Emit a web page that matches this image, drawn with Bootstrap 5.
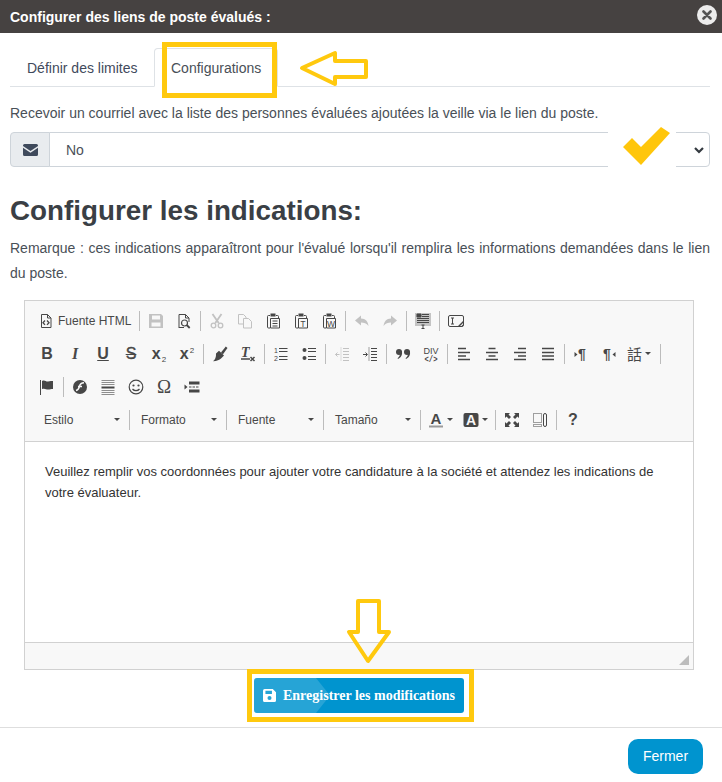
<!DOCTYPE html>
<html lang="fr">
<head>
  <meta charset="UTF-8">
  <meta name="viewport" content="width=device-width, initial-scale=1.0">
  <title>Configurer des liens de poste évalués</title>
  <link href="https://cdn.jsdelivr.net/npm/bootstrap@5.3.3/dist/css/bootstrap.min.css" rel="stylesheet">
  <style>
    html, body { height: 782px; overflow: hidden; }
    body { font-family: "Liberation Sans", Arial, sans-serif; font-size: 14px; color: #495057; background: #fff; position: relative; }

    .fenetre { height: 782px; border: 0; border-radius: 0; }
    .fenetre .modal-header { height: 33px; padding: 0 5px 0 10px; background: #464241; border: 0; border-radius: 0; }
    .titre-fenetre { font-size: 14px; font-weight: 700; color: #fff; line-height: 1; margin: 0; }
    .fermer-rond { width: 20px; height: 20px; border: 0; padding: 0; border-radius: 50%; background: #ececec; color: #555; margin-top: -4px; }
    .fenetre .modal-body { padding: 15px 12px 0 10px; flex: none; }

    .fenetre .nav-tabs { border-color: #dee2e6; height: 39px; }
    .fenetre .nav-tabs .nav-link { font-size: 14px; height: 39px; width: 144px; padding: 9px 0 0 16px; color: #3f4a5c; border-radius: 4px 4px 0 0; }
    .fenetre .nav-tabs .nav-item + .nav-item .nav-link { width: 124px; color: #495057; }
    .consigne { margin: 16px 0 8px; line-height: 21px; }
    .groupe-courriel { height: 35px; flex-wrap: nowrap; }
    .groupe-courriel .input-group-text { width: 40px; flex: none; justify-content: center; padding: 0; background: #e9ecef; border-color: #ced4da; border-radius: 4px 0 0 4px; color: #3f4a5c; }
    .groupe-courriel .form-select { flex: 1 1 0; width: auto; min-width: 0; height: 35px; font-size: 14px; color: #495057; padding: 2px 0 0 16px; border-color: #ced4da; border-radius: 0 4px 4px 0; background-image: url("data:image/svg+xml,%3csvg xmlns='http://www.w3.org/2000/svg' viewBox='0 0 10 8'%3e%3cpath fill='none' stroke='%23343a40' stroke-width='2.200' d='M1 2l4 4 4-4'/%3e%3c/svg%3e"); background-position: right 5px center; background-size: 10px 8px; }
    .titre-indications { font-size: 27.8px; font-weight: 700; line-height: 34px; color: #3a3f45; margin: 27px 0 8px; }
    .remarque { line-height: 25px; text-align: justify; margin: 0 0 14px; }

    .editeur { width: 670px; height: 370px; margin-left: 14px; border: 1px solid #d1d1d1; display: flex; flex-direction: column; }
    .editeur-barre { height: 141px; padding: 3px 0 0 8px; background: #f8f8f8; border-bottom: 1px solid #d1d1d1; flex: none; }
    .barre-ligne { height: 33px; display: flex; align-items: center; }
    .ed-btn { width: 28px; height: 24px; flex: none; display: flex; align-items: center; justify-content: center; color: #474747; }
    .ed-btn svg { width: 16px; height: 16px; display: block; }
    .ed-large { width: 35px; justify-content: flex-start; padding-left: 5px; gap: 3px; }
    .ed-source { width: 104px; justify-content: flex-start; padding-left: 5px; gap: 4px; font-size: 12px; color: #484848; }
    .ed-off { opacity: .3; }
    .ed-sep { width: 1px; height: 20px; background: #bcbcbc; margin: 0 2px; flex: none; }
    .ed-texte { font-size: 16px; line-height: 1; font-weight: 700; color: #474747; }
    .ed-serif { font-family: "Liberation Serif", serif; }
    .ed-souligne { text-decoration: underline; }
    .ed-barre { text-decoration: line-through; font-weight: 400; -webkit-text-stroke: .4px #474747; }
    .ed-petit { font-size: 8px; font-weight: 400; line-height: 1; margin-left: 1px; position: relative; }
    .ed-bas { top: 3px; }
    .ed-haut { top: -6px; }
    .ed-omega { font-weight: 400; font-size: 19px; }
    .ed-fleche { width: 0; height: 0; border: 3px solid transparent; border-top: 3px solid #474747; border-bottom: 0; flex: none; }
    .lang-glyphe { font-family: "Noto Sans CJK TC", "Noto Sans CJK SC", sans-serif; font-size: 15px; line-height: 1; color: #474747; margin-left: -1px; }
    .ed-combo { width: 92px; height: 24px; flex: none; display: flex; align-items: center; justify-content: space-between; padding: 0 7px 0 9px; font-size: 12px; color: #484848; }
    .ed-combo-debut { margin-left: 2px; }
    .editeur-texte { flex: 1; padding: 19px 20px 0; font-size: 13px; line-height: 21px; color: #333; background: #fff; }
    .editeur-pied { height: 27px; flex: none; background: #f8f8f8; border-top: 1px solid #d1d1d1; display: flex; justify-content: flex-end; align-items: flex-end; padding: 0 4px 4px 0; }
    .poignee { width: 10px; height: 10px; background: #bdbdbd; clip-path: polygon(100% 0, 100% 100%, 0 100%); }

    .zone-enregistrer { padding-top: 8px; height: 57px; }
    .btn-enregistrer { width: 210px; height: 35px; margin-left: 244px; padding: 0 0 0 29px; background: #0094cf; color: #fff; border: 0; border-radius: 3px; font-family: "Liberation Serif", serif; font-weight: 700; font-size: 14px; position: relative; text-align: left; overflow: hidden; white-space: nowrap; }
    .btn-enregistrer::before { content: ""; position: absolute; left: 0; top: 0; bottom: 0; width: 76px; background: rgba(255, 255, 255, .15); clip-path: polygon(0 0, 62px 0, 100% 50%, 62px 100%, 0 100%); }
    .btn-enregistrer svg { position: absolute; left: 9px; top: 11px; width: 13px; height: 13px; }
    .fenetre .modal-footer { height: 55px; flex: none; padding: 11px 19px 0 0; margin-top: 0; align-items: flex-start; border-top: 1px solid #dedede; border-radius: 0; }
    .btn-fermer { width: 75px; height: 35px; margin: 0; padding: 0; background: #0094cf; color: #fff; border: 0; border-radius: 10px; font-size: 14px; }

    .annotation { position: absolute; left: 0; top: 0; width: 722px; height: 782px; pointer-events: none; }
  </style>
</head>
<body>

  <svg width="0" height="0" class="position-absolute">
    <defs>
      <symbol id="ic-source" viewBox="0 0 16 16"><path d="M3.500 1.500h6l3.500 3.500v9.500h-9.500z M9.500 1.500v3.500h3.500" fill="none" stroke="currentColor"/><path d="M7 7.500 5 9.700l2 2.200M9 7.500l2 2.200-2 2.200" fill="none" stroke="currentColor" stroke-width="1.300"/></symbol>
      <symbol id="ic-save" viewBox="0 0 16 16"><path d="M1 1h12l2 2v12H1z" fill="currentColor"/><path d="M4 2.500h8v4H4z M3.500 9.500h9v4h-9z" fill="#f8f8f8"/></symbol>
      <symbol id="ic-preview" viewBox="0 0 16 16"><path d="M3 15V1.500h6.500L13 5v4" fill="none" stroke="currentColor"/><path d="M9.500 1.500V5H13" fill="none" stroke="currentColor"/><circle cx="8.500" cy="10" r="3" fill="none" stroke="currentColor" stroke-width="1.200"/><path d="m10.700 12 3 3" stroke="currentColor" stroke-width="1.800"/><path d="M3 14.500h5" stroke="currentColor"/></symbol>
      <symbol id="ic-cut" viewBox="0 0 16 16"><path d="M3.500 1 9.700 10M12.500 1 6.300 10" stroke="currentColor" stroke-width="1.800" fill="none"/><circle cx="4.500" cy="12.500" r="2.300" fill="none" stroke="currentColor" stroke-width="1.300"/><circle cx="11.500" cy="12.500" r="2.300" fill="none" stroke="currentColor" stroke-width="1.300"/></symbol>
      <symbol id="ic-copy" viewBox="0 0 16 16"><path d="M6 11H1.500V1.500h5L9 4v2" fill="none" stroke="currentColor"/><path d="M6.500 5.500h5l3 3v6.500h-8z" fill="none" stroke="currentColor"/></symbol>
      <symbol id="ic-paste" viewBox="0 0 16 16"><path d="M5 2.500H3.500a1 1 0 0 0-1 1V14a1 1 0 0 0 1 1H5M11 2.500h1.500a1 1 0 0 1 1 1V5" fill="none" stroke="currentColor"/><path d="M5.500 .5h5v3h-5z" fill="currentColor"/><path d="M5.500 5.500h9v9.500h-9z" fill="none" stroke="currentColor"/><path d="M7.500 8h5M7.500 10.500h5M7.500 13h5" stroke="currentColor"/></symbol>
      <symbol id="ic-paste-t" viewBox="0 0 16 16"><path d="M5 2.500H3.500a1 1 0 0 0-1 1V14a1 1 0 0 0 1 1H5M11 2.500h1.500a1 1 0 0 1 1 1V5" fill="none" stroke="currentColor"/><path d="M5.500 .5h5v3h-5z" fill="currentColor"/><path d="M5.500 5.500h9v9.500h-9z" fill="none" stroke="currentColor"/><text x="10" y="13.500" text-anchor="middle" font-size="9" font-family="Liberation Mono, monospace" fill="currentColor">T</text></symbol>
      <symbol id="ic-paste-w" viewBox="0 0 16 16"><path d="M5 2.500H3.500a1 1 0 0 0-1 1V14a1 1 0 0 0 1 1H5M11 2.500h1.500a1 1 0 0 1 1 1V5" fill="none" stroke="currentColor"/><path d="M5.500 .5h5v3h-5z" fill="currentColor"/><path d="M5.500 5.500h9v9.500h-9z" fill="none" stroke="currentColor"/><text x="10" y="13.500" text-anchor="middle" font-size="8.500" font-family="Liberation Sans, sans-serif" fill="currentColor">W</text></symbol>
      <symbol id="ic-undo" viewBox="0 0 16 16"><path d="M7 2.500 1 7.500l6 5v-3c3 0 5.500.8 7.500 3.500-.5-4.500-3-7.500-7.500-7.500z" fill="currentColor"/></symbol>
      <symbol id="ic-redo" viewBox="0 0 16 16"><path d="M9 2.500l6 5-6 5v-3c-3 0-5.500.8-7.500 3.500.5-4.500 3-7.500 7.500-7.500z" fill="currentColor"/></symbol>
      <symbol id="ic-blocks" viewBox="0 0 16 16"><path d="M0 0h16v13H0z" fill="#c4c4c4"/><path d="M2 1h4v3H2zM7 1.500h7M7 3.500h7M2 5.500h12M2 7.500h12M2 9.500h12" stroke="currentColor" fill="currentColor"/><path d="M6.500 12h3M8 12v3.500M6.500 15.500h3" stroke="currentColor"/></symbol>
      <symbol id="ic-select" viewBox="0 0 16 16"><rect x=".5" y="2.500" width="15" height="11" rx="1.500" fill="none" stroke="currentColor"/><path d="M3 5h3M4.500 5v6M3 11h3" stroke="currentColor"/><path d="M10 13l5-5v2l-3 3zM13.500 13l1.500-1.500V13z" fill="currentColor"/></symbol>
      <symbol id="ic-brush" viewBox="0 0 16 16"><path d="M9 6.500 13.800.5l1.700 1.500L10.800 8.500z" fill="currentColor"/><path d="M4 7.500 7 4.800l5 4.700-3 3c-1.500 1.500-4 2.500-8 2.700 2-1.300 3.300-4.300 3-7.700z" fill="currentColor"/></symbol>
      <symbol id="ic-clear" viewBox="0 0 16 16"><text x="1" y="11" font-size="14" font-weight="700" font-style="italic" font-family="Liberation Serif, serif" fill="currentColor">T</text><path d="M1 13h9" stroke="currentColor" stroke-width="1.500"/><path d="m10.500 11 4 4m0-4-4 4" stroke="currentColor" stroke-width="1.500"/></symbol>
      <symbol id="ic-ol" viewBox="0 0 16 16"><text x="1" y="7" font-size="7" font-family="Liberation Sans, sans-serif" fill="currentColor">1</text><text x="1" y="15" font-size="7" font-family="Liberation Sans, sans-serif" fill="currentColor">2</text><path d="M6 2.500h8.500M6 5.500h8.500M6 10.500h8.500M6 13.500h8.500" stroke="currentColor"/></symbol>
      <symbol id="ic-ul" viewBox="0 0 16 16"><circle cx="3.500" cy="4" r="2" fill="currentColor"/><circle cx="3.500" cy="12" r="2" fill="currentColor"/><path d="M7 2.500h8M7 5.500h8M7 10.500h8M7 13.500h8" stroke="currentColor"/></symbol>
      <symbol id="ic-outdent" viewBox="0 0 16 16"><path d="M7 1.500v13" stroke="currentColor" stroke-dasharray="1 1"/><path d="M9 2.500h6M9 5.500h6M9 8.500h6M9 11.500h6M9 14.500h6" stroke="currentColor"/><path d="M5.500 8.500H1.500M3.500 6.500l-2 2 2 2" fill="none" stroke="currentColor"/></symbol>
      <symbol id="ic-indent" viewBox="0 0 16 16"><path d="M7 1.500v13" stroke="currentColor" stroke-dasharray="1 1"/><path d="M9 2.500h6M9 5.500h6M9 8.500h6M9 11.500h6M9 14.500h6" stroke="currentColor"/><path d="M1 8.500h4M3.500 6.500l2 2-2 2" fill="none" stroke="currentColor"/></symbol>
      <symbol id="ic-quote" viewBox="0 0 16 16"><circle cx="4" cy="6" r="3" fill="currentColor"/><path d="M5 4c2 .5 2.300 2.500 2 4-.3 2-1.800 4-4 5l-.4-.8C4 11 5 9.500 5 8z" fill="currentColor"/><circle cx="12" cy="6" r="3" fill="currentColor"/><path d="M13 4c2 .5 2.300 2.500 2 4-.3 2-1.800 4-4 5l-.4-.8C12 11 13 9.500 13 8z" fill="currentColor"/></symbol>
      <symbol id="ic-div" viewBox="0 0 16 16"><text x="8" y="8" text-anchor="middle" font-size="9" font-family="Liberation Sans, sans-serif" fill="currentColor">DIV</text><text x="8" y="16" text-anchor="middle" font-size="9" font-weight="700" font-family="Liberation Mono, monospace" textLength="13" lengthAdjust="spacingAndGlyphs" fill="currentColor">&lt;/&gt;</text></symbol>
      <symbol id="ic-left" viewBox="0 0 16 16"><path d="M2 2.500h8M2 6.500h12M2 10h8M2 13.500h12" stroke="currentColor" stroke-width="1.700"/></symbol>
      <symbol id="ic-center" viewBox="0 0 16 16"><path d="M4.500 2.500h7M2 6.500h12M4.500 10h7M2 13.500h12" stroke="currentColor" stroke-width="1.700"/></symbol>
      <symbol id="ic-right" viewBox="0 0 16 16"><path d="M6 2.500h8M2 6.500h12M6 10h8M2 13.500h12" stroke="currentColor" stroke-width="1.700"/></symbol>
      <symbol id="ic-justify" viewBox="0 0 16 16"><path d="M2 2.500h12M2 6.500h12M2 10h12M2 13.500h12" stroke="currentColor" stroke-width="1.700"/></symbol>
      <symbol id="ic-ltr" viewBox="0 0 16 16"><path d="M1.500 6l3 2.500-3 2.500z" fill="currentColor"/><text x="5" y="13" font-size="14" font-weight="700" font-family="Liberation Sans, sans-serif" fill="currentColor">¶</text></symbol>
      <symbol id="ic-rtl" viewBox="0 0 16 16"><path d="M14.500 6l-3 2.500 3 2.500z" fill="currentColor"/><text x="2" y="13" font-size="14" font-weight="700" font-family="Liberation Sans, sans-serif" fill="currentColor">¶</text></symbol>
      <symbol id="ic-flag" viewBox="0 0 16 16"><path d="M1.500 1v15" stroke="currentColor"/><path d="M3 2c3-1.500 4 1 6 .5 2-.4 4-.5 5-.5v8c-2 0-3 .5-5 .5S6 9 3 10z" fill="currentColor"/></symbol>
      <symbol id="ic-flash" viewBox="0 0 16 16"><circle cx="8" cy="8" r="7" fill="currentColor"/><path d="M12 3.800c-3 0-4 1.500-4.500 3.500S6.300 11 4 11.500" fill="none" stroke="#f8f8f8" stroke-width="1.500"/><path d="M6 7.500h4" stroke="#f8f8f8" stroke-width="1.500"/></symbol>
      <symbol id="ic-hr" viewBox="0 0 16 16"><path d="M1.500 1.500h13M1.500 3.500h13M1.500 5.500h13M1.500 11.500h13M1.500 13.500h13M1.500 15.500h13" stroke="currentColor" stroke-opacity=".6"/><path d="M1.500 8.500h13" stroke="currentColor" stroke-width="2"/></symbol>
      <symbol id="ic-smiley" viewBox="0 0 16 16"><circle cx="8" cy="8" r="6.800" fill="none" stroke="currentColor" stroke-width="1.200"/><circle cx="5.500" cy="6.500" r="1.100" fill="currentColor"/><circle cx="10.500" cy="6.500" r="1.100" fill="currentColor"/><path d="M4.500 10c1.800 2.200 5.200 2.200 7 0" fill="none" stroke="currentColor" stroke-width="1.200"/></symbol>
      <symbol id="ic-pagebreak" viewBox="0 0 16 16"><path d="M.5 5.500l3 2.500-3 2.500z" fill="currentColor"/><path d="M5 2.500h10.500v3H5zM5 10.500h10.500v3H5z" fill="currentColor"/><path d="M5 8h10.500" stroke="currentColor" stroke-dasharray="2.500 1"/></symbol>
      <symbol id="ic-forecolor" viewBox="0 0 16 16"><text x="8" y="12" text-anchor="middle" font-size="15" font-weight="700" font-family="Liberation Sans, sans-serif" fill="currentColor">A</text><path d="M1 14.500h14" stroke="#9a9a9a" stroke-width="2"/></symbol>
      <symbol id="ic-backcolor" viewBox="0 0 16 16"><rect x=".5" y="1" width="15" height="14" rx="2" fill="currentColor"/><text x="8" y="13" text-anchor="middle" font-size="14" font-weight="700" font-family="Liberation Sans, sans-serif" fill="#f8f8f8">A</text></symbol>
      <symbol id="ic-maximize" viewBox="0 0 16 16"><path d="M1 1h5L4.500 2.500 7 5 5 7 2.500 4.500 1 6zM15 1v5l-1.500-1.500L11 7 9 5l2.500-2.500L10 1zM1 15v-5l1.500 1.500L5 9l2 2-2.500 2.500L6 15zM15 15h-5l1.500-1.500L9 11l2-2 2.500 2.500L15 10z" fill="currentColor"/></symbol>
      <symbol id="ic-showblocks" viewBox="0 0 16 16"><path d="M1.500 1.500h8v9h-8zM1.500 12.500h8v2h-8z" fill="none" stroke="currentColor" stroke-dasharray="1 1"/><rect x="11.500" y="1.500" width="3" height="13" rx="1.500" fill="none" stroke="currentColor"/></symbol>
    </defs>
  </svg>

  <div class="modal-content fenetre">
    <div class="modal-header">
      <h5 class="titre-fenetre">Configurer des liens de poste évalués :</h5>
      <button type="button" class="fermer-rond d-flex align-items-center justify-content-center ms-auto" aria-label="Fermer">
        <svg width="10" height="10" viewBox="0 0 10 10"><path d="M1.500 1.500l7 7m0-7-7 7" stroke="currentColor" stroke-width="2.600" stroke-linecap="round"/></svg>
      </button>
    </div>

    <div class="modal-body">
      <ul class="nav nav-tabs">
        <li class="nav-item"><a class="nav-link" href="#">Définir des limites</a></li>
        <li class="nav-item"><a class="nav-link active" href="#">Configurations</a></li>
      </ul>

      <p class="consigne">Recevoir un courriel avec la liste des personnes évaluées ajoutées la veille via le lien du poste.</p>
      <div class="input-group groupe-courriel">
        <span class="input-group-text">
          <svg width="15" height="12" viewBox="0 0 15 12"><path d="M1.500 0h12A1.500 1.500 0 0 1 15 1.500v.4L7.500 7 0 1.900v-.4A1.500 1.500 0 0 1 1.500 0zM0 3.700 7.500 8.800 15 3.700v6.800a1.500 1.500 0 0 1-1.500 1.500h-12A1.500 1.500 0 0 1 0 10.500z" fill="currentColor"/></svg>
        </span>
        <select class="form-select"><option>No</option></select>
      </div>

      <h2 class="titre-indications">Configurer les indications:</h2>
      <p class="remarque">Remarque : ces indications apparaîtront pour l'évalué lorsqu'il remplira les informations demandées dans le lien du poste.</p>

      <div class="editeur">
        <div class="editeur-barre">
          <div class="barre-ligne">
            <span class="ed-btn ed-source"><svg><use href="#ic-source"/></svg>Fuente HTML</span>
            <span class="ed-sep"></span>
            <span class="ed-btn ed-off"><svg><use href="#ic-save"/></svg></span>
            <span class="ed-btn"><svg><use href="#ic-preview"/></svg></span>
            <span class="ed-sep"></span>
            <span class="ed-btn ed-off"><svg><use href="#ic-cut"/></svg></span>
            <span class="ed-btn ed-off"><svg><use href="#ic-copy"/></svg></span>
            <span class="ed-btn"><svg><use href="#ic-paste"/></svg></span>
            <span class="ed-btn"><svg><use href="#ic-paste-t"/></svg></span>
            <span class="ed-btn"><svg><use href="#ic-paste-w"/></svg></span>
            <span class="ed-sep"></span>
            <span class="ed-btn ed-off"><svg><use href="#ic-undo"/></svg></span>
            <span class="ed-btn ed-off"><svg><use href="#ic-redo"/></svg></span>
            <span class="ed-sep"></span>
            <span class="ed-btn"><svg><use href="#ic-blocks"/></svg></span>
            <span class="ed-sep"></span>
            <span class="ed-btn"><svg><use href="#ic-select"/></svg></span>
          </div>
          <div class="barre-ligne">
            <span class="ed-btn"><span class="ed-texte">B</span></span>
            <span class="ed-btn"><span class="ed-texte ed-serif fst-italic">I</span></span>
            <span class="ed-btn"><span class="ed-texte ed-souligne">U</span></span>
            <span class="ed-btn"><span class="ed-texte ed-barre">S</span></span>
            <span class="ed-btn"><span class="ed-texte">x<span class="ed-petit ed-bas">2</span></span></span>
            <span class="ed-btn"><span class="ed-texte">x<span class="ed-petit ed-haut">2</span></span></span>
            <span class="ed-sep"></span>
            <span class="ed-btn"><svg><use href="#ic-brush"/></svg></span>
            <span class="ed-btn"><svg><use href="#ic-clear"/></svg></span>
            <span class="ed-sep"></span>
            <span class="ed-btn"><svg><use href="#ic-ol"/></svg></span>
            <span class="ed-btn"><svg><use href="#ic-ul"/></svg></span>
            <span class="ed-sep"></span>
            <span class="ed-btn ed-off"><svg><use href="#ic-outdent"/></svg></span>
            <span class="ed-btn"><svg><use href="#ic-indent"/></svg></span>
            <span class="ed-sep"></span>
            <span class="ed-btn"><svg><use href="#ic-quote"/></svg></span>
            <span class="ed-btn"><svg><use href="#ic-div"/></svg></span>
            <span class="ed-sep"></span>
            <span class="ed-btn"><svg><use href="#ic-left"/></svg></span>
            <span class="ed-btn"><svg><use href="#ic-center"/></svg></span>
            <span class="ed-btn"><svg><use href="#ic-right"/></svg></span>
            <span class="ed-btn"><svg><use href="#ic-justify"/></svg></span>
            <span class="ed-sep"></span>
            <span class="ed-btn"><svg><use href="#ic-ltr"/></svg></span>
            <span class="ed-btn"><svg><use href="#ic-rtl"/></svg></span>
            <span class="ed-btn ed-large"><span class="lang-glyphe">話</span><span class="ed-fleche"></span></span>
            <span class="ed-sep"></span>
          </div>
          <div class="barre-ligne">
            <span class="ed-btn"><svg><use href="#ic-flag"/></svg></span>
            <span class="ed-sep"></span>
            <span class="ed-btn"><svg><use href="#ic-flash"/></svg></span>
            <span class="ed-btn"><svg><use href="#ic-hr"/></svg></span>
            <span class="ed-btn"><svg><use href="#ic-smiley"/></svg></span>
            <span class="ed-btn"><span class="ed-texte ed-serif ed-omega">Ω</span></span>
            <span class="ed-btn"><svg><use href="#ic-pagebreak"/></svg></span>
          </div>
          <div class="barre-ligne">
            <span class="ed-combo ed-combo-debut">Estilo<span class="ed-fleche"></span></span>
            <span class="ed-sep"></span>
            <span class="ed-combo">Formato<span class="ed-fleche"></span></span>
            <span class="ed-sep"></span>
            <span class="ed-combo">Fuente<span class="ed-fleche"></span></span>
            <span class="ed-sep"></span>
            <span class="ed-combo">Tamaño<span class="ed-fleche"></span></span>
            <span class="ed-sep"></span>
            <span class="ed-btn ed-large"><svg><use href="#ic-forecolor"/></svg><span class="ed-fleche"></span></span>
            <span class="ed-btn ed-large"><svg><use href="#ic-backcolor"/></svg><span class="ed-fleche"></span></span>
            <span class="ed-sep"></span>
            <span class="ed-btn"><svg><use href="#ic-maximize"/></svg></span>
            <span class="ed-btn"><svg><use href="#ic-showblocks"/></svg></span>
            <span class="ed-sep"></span>
            <span class="ed-btn"><span class="ed-texte">?</span></span>
          </div>
        </div>
        <div class="editeur-texte">Veuillez remplir vos coordonnées pour ajouter votre candidature à la société et attendez les indications de votre évaluateur.</div>
        <div class="editeur-pied"><span class="poignee"></span></div>
      </div>

      <div class="zone-enregistrer">
        <button type="button" class="btn btn-enregistrer">
          <svg viewBox="0 0 16 16"><path d="M2 0h10l4 4v10a2 2 0 0 1-2 2H2a2 2 0 0 1-2-2V2a2 2 0 0 1 2-2zm1 2v4h8V2zm5 6.500a2.500 2.500 0 1 0 0 5 2.500 2.500 0 0 0 0-5z" fill="#fff" fill-rule="evenodd"/></svg>
          Enregistrer les modifications
        </button>
      </div>
    </div>

    <div class="modal-footer">
      <button type="button" class="btn btn-fermer">Fermer</button>
    </div>
  </div>

  <!-- annotations jaunes par-dessus la capture -->
  <svg class="annotation" viewBox="0 0 722 782">
    <rect x="608" y="131" width="68" height="37" fill="#fff"/>
    <polygon points="623,147 641,165 670,133 661,127 641,147 632,138" fill="#ffc60b"/>
    <rect x="164.500" y="44.500" width="110" height="51" fill="none" stroke="#ffc90e" stroke-width="5"/>
    <polygon points="302,68 335,53 335,61 366,61 366,77 335,77 335,84" fill="none" stroke="#ffc90e" stroke-width="4" stroke-linejoin="round"/>
    <polygon points="358,601 379,601 379,632 389,632 368,661 349,632 358,632" fill="none" stroke="#ffc90e" stroke-width="4" stroke-linejoin="round"/>
    <rect x="249.500" y="671.500" width="222" height="48" fill="none" stroke="#ffc90e" stroke-width="5"/>
  </svg>

  <script src="https://cdn.jsdelivr.net/npm/bootstrap@5.3.3/dist/js/bootstrap.bundle.min.js"></script>
</body>
</html>
